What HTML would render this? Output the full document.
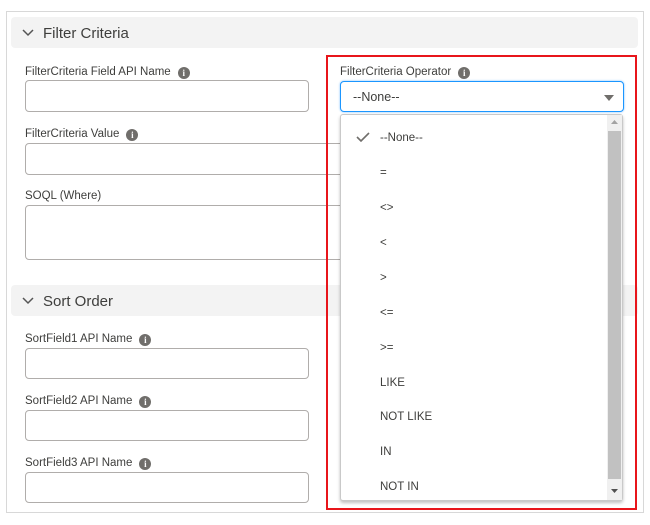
<!DOCTYPE html>
<html><head><style>
body{margin:0;width:650px;height:525px;background:#fff;font-family:"Liberation Sans",sans-serif;position:relative;overflow:hidden;color:#3e3e3c}
.a{position:absolute}
.panel{left:6px;top:11px;width:638px;height:502px;border:1px solid #d8d8d8;box-sizing:border-box}
.hdr{left:11px;width:627px;height:31px;background:#f3f3f3;border-radius:4px;font-size:15px;color:#3e3e3c}
.hdr span{position:absolute;left:32px;top:8px}
.hdr svg{position:absolute;left:11px;top:12px}
.lbl{font-size:11.5px;color:#3e3e3c}
.i{display:inline-block;width:12px;height:12px;border-radius:50%;background:#706e6b;color:#fff;font-size:9px;font-weight:bold;text-align:center;line-height:12px;margin-left:7px;vertical-align:-1px;font-family:"Liberation Serif",serif}
.in{border:1px solid #b0adab;border-radius:4px;background:#fff;box-sizing:border-box}
.opt{left:380px;font-size:11.5px;color:#3e3e3c}
</style></head><body>
<div class="a panel"></div>
<div class="a hdr" style="top:17px"><svg width="12" height="8"><path d="M1 1L6 6L11 1" stroke="#555" stroke-width="1.5" fill="none"/></svg><span>Filter Criteria</span></div>
<div class="a lbl" style="left:25px;top:66px">FilterCriteria Field API Name<span class="i">i</span></div>
<div class="a in" style="left:25px;top:80px;width:284px;height:32px"></div>
<div class="a lbl" style="left:25px;top:128px">FilterCriteria Value<span class="i">i</span></div>
<div class="a in" style="left:25px;top:143px;width:330px;height:32px"></div>
<div class="a lbl" style="left:25px;top:190px">SOQL (Where)</div>
<div class="a in" style="left:25px;top:205px;width:330px;height:55px"></div>
<div class="a hdr" style="top:285px"><svg width="12" height="8"><path d="M1 1L6 6L11 1" stroke="#555" stroke-width="1.5" fill="none"/></svg><span>Sort Order</span></div>
<div class="a lbl" style="left:25px;top:333px">SortField1 API Name<span class="i">i</span></div>
<div class="a in" style="left:25px;top:348px;width:284px;height:31px"></div>
<div class="a lbl" style="left:25px;top:395px">SortField2 API Name<span class="i">i</span></div>
<div class="a in" style="left:25px;top:410px;width:284px;height:31px"></div>
<div class="a lbl" style="left:25px;top:457px">SortField3 API Name<span class="i">i</span></div>
<div class="a in" style="left:25px;top:472px;width:284px;height:31px"></div>

<div class="a" style="left:326px;top:55px;width:311px;height:455px;border:2px solid #e8151b;box-sizing:border-box"></div>
<div class="a lbl" style="left:340px;top:66px">FilterCriteria Operator<span class="i">i</span></div>
<div class="a in" style="left:340px;top:81px;width:284px;height:31px;border-color:#1b96ff;box-shadow:0 0 2px #7fbfff"><span class="a" style="left:12px;top:8px;font-size:12.5px">--None--</span><svg class="a" style="left:263px;top:13px" width="10" height="6"><path d="M0 0H10L5 6Z" fill="#706e6b"/></svg></div>
<div class="a" style="left:340px;top:114px;width:283px;height:387px;background:#fff;border:1px solid #c9c9c9;border-radius:3px;box-shadow:0 2px 3px rgba(0,0,0,.25);box-sizing:border-box"></div>
<div class="a" style="left:607px;top:115px;width:15px;height:385px;background:#f0f0f0"></div>
<div class="a" style="left:608px;top:131px;width:13px;height:348px;background:#c1c1c1"></div>
<svg class="a" style="left:611px;top:120px" width="7" height="4"><path d="M0 4H7L3.5 0Z" fill="#a3a3a3"/></svg>
<svg class="a" style="left:611px;top:489px" width="7" height="4"><path d="M0 0H7L3.5 4Z" fill="#505050"/></svg>
<svg class="a" style="left:356px;top:132px" width="14" height="10"><path d="M1 5L5 9L13 1" stroke="#706e6b" stroke-width="1.6" fill="none"/></svg>
<div class="a opt" style="top:132px">--None--</div>
<div class="a opt" style="top:167px">=</div>
<div class="a opt" style="top:202px">&lt;&gt;</div>
<div class="a opt" style="top:237px">&lt;</div>
<div class="a opt" style="top:272px">&gt;</div>
<div class="a opt" style="top:307px">&lt;=</div>
<div class="a opt" style="top:342px">&gt;=</div>
<div class="a opt" style="top:377px">LIKE</div>
<div class="a opt" style="top:411px">NOT LIKE</div>
<div class="a opt" style="top:446px">IN</div>
<div class="a opt" style="top:481px">NOT IN</div>
</body></html>
